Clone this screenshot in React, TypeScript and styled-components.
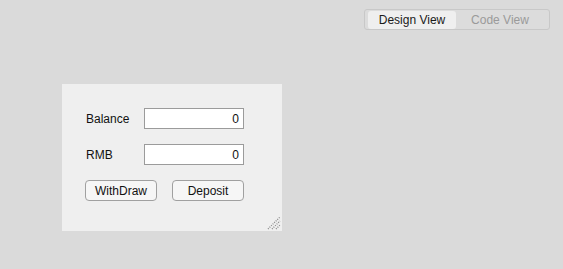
import React from 'react';
import styled, { createGlobalStyle } from 'styled-components';

const GlobalStyle = createGlobalStyle`
  html, body {
    margin: 0;
    padding: 0;
    background: #dadada;
    font-family: "Liberation Sans", Arial, sans-serif;
  }
`;

const Page = styled.div`
  width: 563px;
  height: 269px;
  display: flex;
  flex-direction: column;
`;

const TopBar = styled.div`
  display: flex;
  justify-content: flex-end;
  padding: 9px 13px 0 0;
`;

const Segmented = styled.div`
  display: flex;
  width: 186px;
  height: 21px;
  box-sizing: border-box;
  padding: 1px 3px;
  border: 1px solid #c8c8c8;
  border-radius: 3px;
  background: #dcdcdc;
`;

const Segment = styled.div<{ active?: boolean }>`
  width: 88px;
  height: 18px;
  display: flex;
  align-items: center;
  justify-content: center;
  font-size: 12px;
  border-radius: 3px;
  background: ${(p) => (p.active ? '#efefef' : 'transparent')};
  color: ${(p) => (p.active ? '#1a1a1a' : '#9a9a9a')};
`;

const Panel = styled.div`
  position: relative;
  margin: 54px 0 0 62px;
  width: 220px;
  height: 147px;
  box-sizing: border-box;
  background: #efefef;
  padding: 24px 0 0 23px;
  display: grid;
  grid-template-columns: 59px 100px;
  grid-auto-rows: 21px;
  row-gap: 15px;
`;

const Label = styled.label`
  font-size: 12px;
  color: #111;
  display: flex;
  align-items: center;
  padding: 1px 0 0 1px;
`;

const Field = styled.input`
  width: 100px;
  height: 21px;
  box-sizing: border-box;
  border: 1px solid #9b9b9b;
  background: #fff;
  text-align: right;
  padding: 0 4px 0 0;
  font-family: "Liberation Sans", Arial, sans-serif;
  font-size: 12px;
  color: #111;
  outline: none;
`;

const ButtonRow = styled.div`
  grid-column: 1 / span 2;
  display: flex;
  gap: 15px;
`;

const Button = styled.button`
  width: 72px;
  height: 21px;
  box-sizing: border-box;
  border: 1px solid #a0a0a0;
  border-radius: 4px;
  background: #f6f6f6;
  font-family: "Liberation Sans", Arial, sans-serif;
  font-size: 12px;
  color: #111;
  padding: 0;
`;

const Grip = styled.svg`
  position: absolute;
  right: 1px;
  bottom: 1px;
`;

const ResizeGrip = () => (
  <Grip width="14" height="14" viewBox="0 0 14 14">
    <g stroke="#8c8c8c" strokeWidth="1.3" strokeDasharray="1 1.2" fill="none">
      <line x1="1" y1="13" x2="13" y2="1" />
      <line x1="5" y1="13" x2="13" y2="5" />
      <line x1="9" y1="13" x2="13" y2="9" />
    </g>
  </Grip>
);

const App = () => {
  const [balance, setBalance] = React.useState('0');
  const [rmb, setRmb] = React.useState('0');

  return (
    <Page>
      <GlobalStyle />
      <TopBar>
        <Segmented>
          <Segment active>Design View</Segment>
          <Segment>Code View</Segment>
        </Segmented>
      </TopBar>
      <Panel>
        <Label>Balance</Label>
        <Field value={balance} onChange={(e) => setBalance(e.target.value)} />
        <Label>RMB</Label>
        <Field value={rmb} onChange={(e) => setRmb(e.target.value)} />
        <ButtonRow>
          <Button>WithDraw</Button>
          <Button>Deposit</Button>
        </ButtonRow>
        <ResizeGrip />
      </Panel>
    </Page>
  );
};

export default App;
